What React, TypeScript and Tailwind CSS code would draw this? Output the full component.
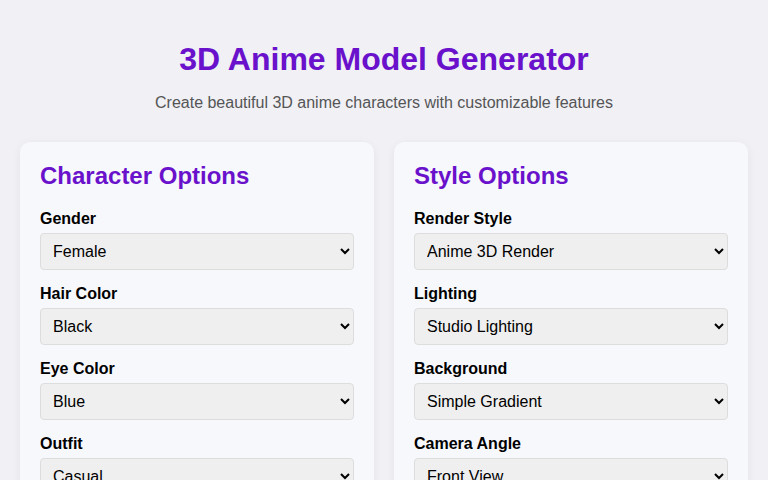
import React, { useState } from 'react';

// Option lists for each dropdown
const characterFields = [
  { id: 'gender', label: 'Gender', options: ['Female', 'Male', 'Non-binary'] },
  { id: 'hair', label: 'Hair Color', options: ['Black', 'Blonde', 'Brown', 'Pink', 'Blue', 'Silver'] },
  { id: 'eyes', label: 'Eye Color', options: ['Blue', 'Green', 'Brown', 'Red', 'Purple'] },
  { id: 'outfit', label: 'Outfit', options: ['Casual', 'School Uniform', 'Fantasy Armor', 'Kimono'] },
];

const styleFields = [
  { id: 'render', label: 'Render Style', options: ['Anime 3D Render', 'Cel Shaded', 'Chibi', 'Realistic Anime'] },
  { id: 'lighting', label: 'Lighting', options: ['Studio Lighting', 'Natural Light', 'Dramatic', 'Neon'] },
  { id: 'background', label: 'Background', options: ['Simple Gradient', 'City Street', 'Forest', 'Transparent'] },
  { id: 'camera', label: 'Camera Angle', options: ['Front View', 'Side View', 'Three-Quarter', 'Top Down'] },
];

type Field = { id: string; label: string; options: string[] };

const OptionCard: React.FC<{ title: string; fields: Field[] }> = ({ title, fields }) => {
  const [values, setValues] = useState<Record<string, string>>(
    Object.fromEntries(fields.map((f) => [f.id, f.options[0]]))
  );

  return (
    <div className="bg-[#f7f8fc] rounded-[10px] shadow-[0_2px_10px_rgba(0,0,0,0.06)] px-5 pt-5 pb-5">
      <h2 className="text-[24px] leading-[28px] font-bold text-[#6a11cb] mb-5">{title}</h2>
      {fields.map((field) => (
        <div key={field.id} className="mb-[15px]">
          <label htmlFor={field.id} className="block text-[16px] leading-[18px] font-bold text-black mb-[5px]">
            {field.label}
          </label>
          <select
            id={field.id}
            value={values[field.id]}
            onChange={(e) => setValues({ ...values, [field.id]: e.target.value })}
            className="w-full h-[37px] px-2 text-[16px] text-black bg-[#efefef] border border-[#dddddd] rounded-[4px]"
          >
            {field.options.map((opt) => (
              <option key={opt}>{opt}</option>
            ))}
          </select>
        </div>
      ))}
    </div>
  );
};

const App: React.FC = () => {
  return (
    <div className="min-h-screen bg-[#f0f0f5] px-5 pt-[41px] pb-5" style={{ fontFamily: '"Liberation Sans", Arial, sans-serif' }}>
      {/* Header */}
      <h1 className="text-center text-[32px] leading-[37px] font-bold text-[#6a11cb]">3D Anime Model Generator</h1>
      <p className="text-center text-[16px] leading-[18px] text-[#555555] mt-4">
        Create beautiful 3D anime characters with customizable features
      </p>

      {/* Options */}
      <div className="grid grid-cols-2 gap-5 mt-[30px]">
        <OptionCard title="Character Options" fields={characterFields} />
        <OptionCard title="Style Options" fields={styleFields} />
      </div>
    </div>
  );
};

export default App;
